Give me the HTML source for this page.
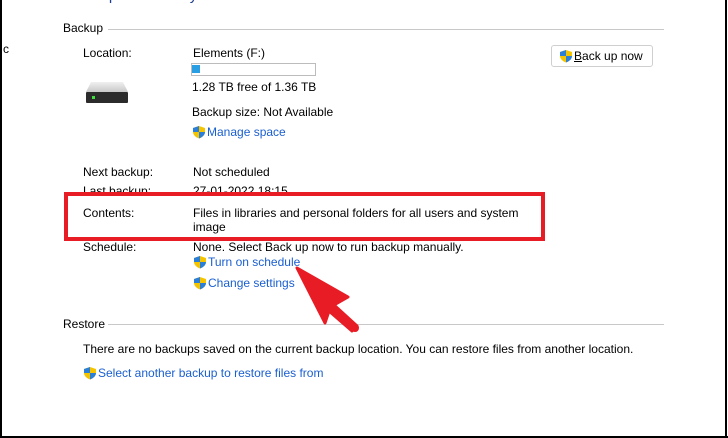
<!DOCTYPE html>
<html><head><meta charset="utf-8"><style>
body{margin:0;width:728px;height:438px;background:#fff;position:relative;overflow:hidden;font-family:"Liberation Sans",sans-serif;font-size:12px;color:#000}
.a{position:absolute;white-space:nowrap}
.l{color:#1a5fd0}
.hr{position:absolute;height:1px;background:#c8c8c8}
.sh{display:inline-block;width:14px;height:14px;vertical-align:-3px;margin-right:1px}
</style></head><body>
<div style="position:absolute;left:0;top:0;width:2px;height:438px;background:#000"></div>
<div style="position:absolute;left:725px;top:0;width:2px;height:438px;background:#000"></div>
<div style="position:absolute;left:0;top:436px;width:728px;height:2px;background:#000"></div>
<div class="a" style="left:63px;top:-13px;font-size:15px;color:#1e3d8f">Back up or restore your files</div>
<div class="a" style="left:3px;top:42px">c</div>
<div class="a" style="left:63px;top:21px">Backup</div>
<div class="hr" style="left:108px;top:29px;width:556px"></div>
<div class="a" style="left:83px;top:46px">Location:</div>
<div class="a" style="left:193px;top:46px">Elements (F:)</div>
<div style="position:absolute;left:191px;top:63px;width:123px;height:11px;border:1px solid #bcbcbc"></div>
<div style="position:absolute;left:192px;top:65px;width:8px;height:8px;background:#2a9ee3"></div>
<div class="a" style="left:192px;top:80px">1.28 TB free of 1.36 TB</div>
<div style="position:absolute;left:86px;top:82px;width:42px;height:10px;background:linear-gradient(#f0f0f0,#c8c8c8);clip-path:polygon(12% 0,88% 0,100% 100%,0 100%)"></div>
<div style="position:absolute;left:86px;top:92px;width:42px;height:11px;background:#2b2b2b;border-radius:1px"></div>
<div style="position:absolute;left:92px;top:96px;width:3px;height:3px;background:#3de03d"></div>
<div class="a" style="left:192px;top:105px">Backup size: Not Available</div>
<div class="a l" style="left:192px;top:125px"><svg class="sh" viewBox="0 0 14 14"><path d="M7 1L1 3v4c0 3 3 5.5 6 6.5 3-1 6-3.5 6-6.5V3z" fill="#f5c400"/><path d="M7 1L1 3v4h6zM7 7v6.5c3-1 6-3.5 6-6.5H7z" fill="#2b7fd6"/></svg>Manage space</div>
<div style="position:absolute;left:551px;top:45px;width:100px;height:20px;border:1px solid #cfcfcf;border-radius:3px"></div>
<div class="a" style="left:559px;top:49px"><svg class="sh" viewBox="0 0 14 14"><path d="M7 1L1 3v4c0 3 3 5.5 6 6.5 3-1 6-3.5 6-6.5V3z" fill="#f5c400"/><path d="M7 1L1 3v4h6zM7 7v6.5c3-1 6-3.5 6-6.5H7z" fill="#2b7fd6"/></svg><u>B</u>ack up now</div>
<div class="a" style="left:83px;top:165px">Next backup:</div>
<div class="a" style="left:193px;top:165px">Not scheduled</div>
<div class="a" style="left:83px;top:184px">Last backup:</div>
<div class="a" style="left:193px;top:184px">27-01-2022 18:15</div>
<div style="position:absolute;left:64px;top:192px;width:473px;height:41px;border:4px solid #e81c25;background:#fff"></div>
<div class="a" style="left:83px;top:206px">Contents:</div>
<div class="a" style="left:193px;top:206px">Files in libraries and personal folders for all users and system</div>
<div class="a" style="left:193px;top:220px">image</div>
<div class="a" style="left:83px;top:240px">Schedule:</div>
<div class="a" style="left:193px;top:240px">None. Select Back up now to run backup manually.</div>
<div class="a l" style="left:193px;top:255px"><svg class="sh" viewBox="0 0 14 14"><path d="M7 1L1 3v4c0 3 3 5.5 6 6.5 3-1 6-3.5 6-6.5V3z" fill="#f5c400"/><path d="M7 1L1 3v4h6zM7 7v6.5c3-1 6-3.5 6-6.5H7z" fill="#2b7fd6"/></svg>Turn on schedule</div>
<div class="a l" style="left:193px;top:276px"><svg class="sh" viewBox="0 0 14 14"><path d="M7 1L1 3v4c0 3 3 5.5 6 6.5 3-1 6-3.5 6-6.5V3z" fill="#f5c400"/><path d="M7 1L1 3v4h6zM7 7v6.5c3-1 6-3.5 6-6.5H7z" fill="#2b7fd6"/></svg>Change settings</div>
<div class="a" style="left:63px;top:317px">Restore</div>
<div class="hr" style="left:108px;top:324px;width:556px"></div>
<div class="a" style="left:83px;top:342px">There are no backups saved on the current backup location. You can restore files from another location.</div>
<div class="a l" style="left:83px;top:366px"><svg class="sh" viewBox="0 0 14 14"><path d="M7 1L1 3v4c0 3 3 5.5 6 6.5 3-1 6-3.5 6-6.5V3z" fill="#f5c400"/><path d="M7 1L1 3v4h6zM7 7v6.5c3-1 6-3.5 6-6.5H7z" fill="#2b7fd6"/></svg>Select another backup to restore files from</div>
<svg style="position:absolute;left:0;top:0" width="728" height="438">
<path d="M297 268L348 297L334 305L357 326L352 331L329 311L325 323Z" fill="#e81c25" stroke="#e81c25" stroke-width="3" stroke-linejoin="round"/>
<line x1="333" y1="308" x2="355" y2="328" stroke="#e81c25" stroke-width="8" stroke-linecap="round"/>
</svg>
</body></html>
